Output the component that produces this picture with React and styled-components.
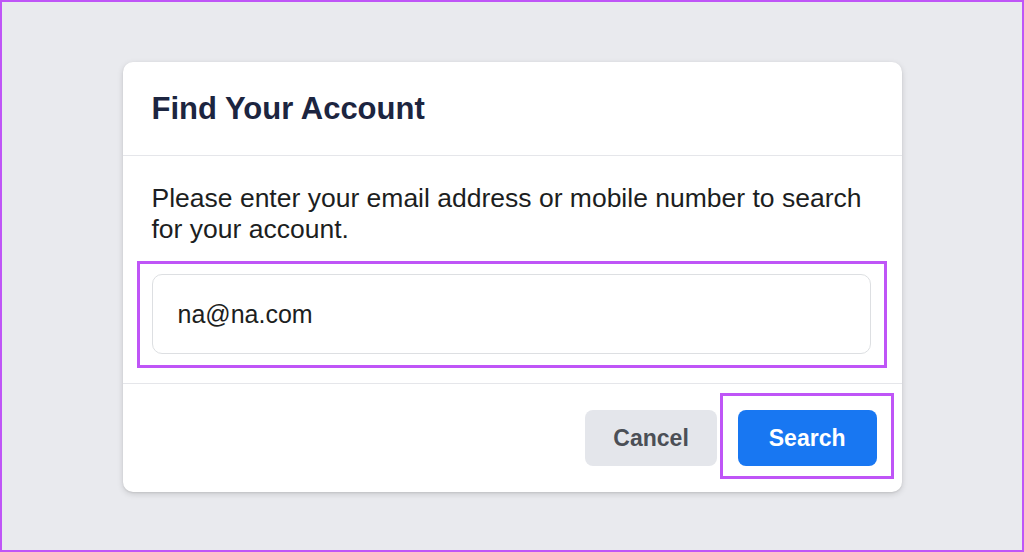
import React from 'react';
import styled, { createGlobalStyle } from 'styled-components';

const GlobalStyle = createGlobalStyle`
  html, body {
    margin: 0;
    padding: 0;
  }
  body {
    font-family: "Liberation Sans", Arial, Helvetica, sans-serif;
  }
`;

const highlight = '#bf55f7';

const Page = styled.div`
  box-sizing: border-box;
  width: 100vw;
  height: 552px;
  padding-top: 2px;
  border: 2px solid ${highlight};
  background-color: #e9eaee;
  display: flex;
  align-items: center;
  justify-content: center;
`;

const Card = styled.div`
  width: 779px;
  background: #ffffff;
  border-radius: 10px;
  box-shadow: 0 2px 6px rgba(0, 0, 0, 0.14), 0 1px 2px rgba(0, 0, 0, 0.08);
  display: flex;
  flex-direction: column;
`;

const Header = styled.div`
  height: 93px;
  padding: 0 29px;
  display: flex;
  align-items: center;
  border-bottom: 1px solid #e5e6ea;
`;

const Title = styled.h2`
  margin: 0;
  font-size: 31px;
  font-weight: 700;
  color: #1c2540;
`;

const Body = styled.div`
  padding: 27px 31px 29px 29px;
  border-bottom: 1px solid #e5e6ea;
  display: flex;
  flex-direction: column;
  gap: 29px;
`;

const Prompt = styled.p`
  margin: 0;
  font-size: 26.5px;
  line-height: 31px;
  color: #1c1e21;
`;

/* square annotation frame drawn over the marked control */
const Marked = styled.div`
  position: relative;
  display: ${(p) => (p.$inline ? 'inline-flex' : 'flex')};

  &::after {
    content: '';
    position: absolute;
    top: -${(p) => p.$top}px;
    bottom: -${(p) => p.$bottom}px;
    left: -${(p) => p.$left}px;
    right: -${(p) => p.$right}px;
    border: 3px solid ${highlight};
    pointer-events: none;
  }
`;

const Input = styled.input`
  box-sizing: border-box;
  width: 100%;
  height: 80px;
  padding: 0 25px;
  border: 1px solid #dddfe2;
  border-radius: 10px;
  font-family: inherit;
  font-size: 25px;
  color: #1c1e21;
  background: #fff;
  outline: none;
`;

const Footer = styled.div`
  padding: 26px 25px 26px;
  display: flex;
  justify-content: flex-end;
  gap: 21px;
`;

const Button = styled.button`
  height: 56px;
  padding: 0 ${(p) => (p.$primary ? '31px' : '28px')};
  border: none;
  border-radius: 8px;
  font-family: inherit;
  font-size: 23px;
  font-weight: 700;
  cursor: pointer;
  background: ${(p) => (p.$primary ? '#1877f2' : '#e4e6eb')};
  color: ${(p) => (p.$primary ? '#ffffff' : '#4b4f56')};
  outline: none;
`;

export default function App() {
  return (
    <>
      <GlobalStyle />
      <Page>
        <Card>
          <Header>
            <Title>Find Your Account</Title>
          </Header>
          <Body>
            <Prompt>
              Please enter your email address or mobile number to search for your account.
            </Prompt>
            <Marked $top={13} $bottom={14} $left={15} $right={16}>
              <Input type="text" defaultValue="na@na.com" />
            </Marked>
          </Body>
          <Footer>
            <Button>Cancel</Button>
            <Marked $inline $top={17} $bottom={13} $left={18} $right={17}>
              <Button $primary>Search</Button>
            </Marked>
          </Footer>
        </Card>
      </Page>
    </>
  );
}
